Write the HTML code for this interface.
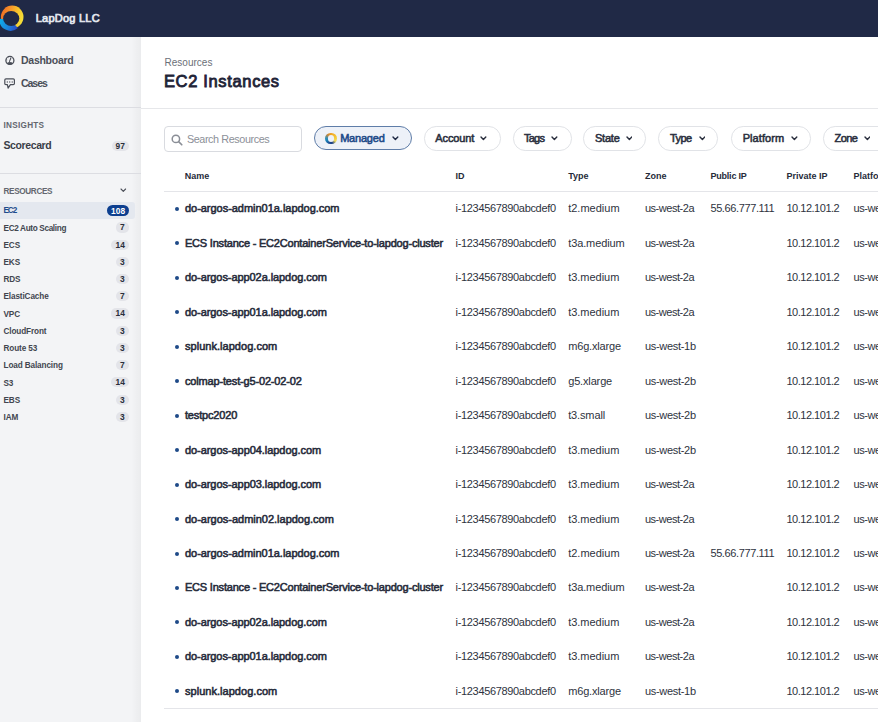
<!DOCTYPE html>
<html><head><meta charset="utf-8">
<style>
*{box-sizing:border-box;margin:0;padding:0}
html,body{width:878px;height:722px;overflow:hidden;background:#fff;font-family:"Liberation Sans",sans-serif;color:#262b3a}
.t{position:absolute;white-space:nowrap}
.b{position:absolute}
</style></head><body>
<div class="b" style="left:0;top:0;width:878px;height:37px;background:#202946"></div>
<svg class="b" style="left:0;top:0" width="32" height="36" viewBox="0 0 32 36">
<defs>
<linearGradient id="lgA" x1="0" y1="0.3" x2="1" y2="0.6">
<stop offset="0" stop-color="#f06c22"/><stop offset="0.35" stop-color="#f5952a"/><stop offset="0.7" stop-color="#f6c82c"/><stop offset="1" stop-color="#f6e23a"/>
</linearGradient>
<linearGradient id="lgB" x1="0" y1="0.4" x2="1" y2="0.7">
<stop offset="0" stop-color="#10a8ea"/><stop offset="0.5" stop-color="#1b84dc"/><stop offset="1" stop-color="#2c48c4"/>
</linearGradient>
</defs>
<circle cx="12.2" cy="16.9" r="11.3" fill="url(#lgA)"/>
<path d="M10.5 19.8 L17.86 27.97 A11 11 0 0 1 -0.44 18.65 Z" fill="url(#lgB)"/>
<ellipse cx="11.2" cy="18.5" rx="8.1" ry="7.5" fill="#202946"/>
</svg>
<div class="t" style="left:35.75px;top:13.00px;font-size:11px;line-height:11px;font-weight:normal;color:#e6e9f0;letter-spacing:0.231px;-webkit-text-stroke:0.7px #e6e9f0;">LapDog LLC</div>
<div class="b" style="left:0;top:37px;width:141px;height:685px;background:#f3f4f6"></div>
<div class="b" style="left:131px;top:37px;width:10px;height:685px;background:linear-gradient(to right,rgba(0,0,0,0),rgba(0,0,0,0.035))"></div>
<svg class="b" style="left:0;top:50px" width="20" height="45" viewBox="0 50 20 45">
<circle cx="9.9" cy="60.45" r="4.0" fill="none" stroke="#4a4e58" stroke-width="1.3"/>
<path d="M6.6 63.2 Q9.9 60.6 13.2 63.2 L12.6 64.1 Q9.9 65.6 7.2 64.1 Z" fill="#4a4e58"/>
<path d="M9.5 61.4 L10.9 57.9" stroke="#4a4e58" stroke-width="1.1" stroke-linecap="round"/>
<path d="M6.3 59.6 L7.2 59.9 M8.0 57.4 L8.4 58.1 M12.7 58.5 L12.1 59.1" stroke="#4a4e58" stroke-width="0.7"/>
</svg>
<div class="t" style="left:21.00px;top:55.00px;font-size:10.5px;line-height:10.5px;font-weight:bold;color:#4a4e58;letter-spacing:-0.266px;">Dashboard</div>
<svg class="b" style="left:0;top:75px" width="20" height="16" viewBox="0 75 20 16">
<path d="M6.0 78.9 H13.2 Q14.4 78.9 14.4 80.1 V83.4 Q14.4 84.6 13.2 84.6 H10.4 L8.1 88.1 L7.4 84.6 H6.0 Q4.8 84.6 4.8 83.4 V80.1 Q4.8 78.9 6.0 78.9 Z" fill="none" stroke="#4a4e58" stroke-width="1.2" stroke-linejoin="round"/>
<circle cx="7.3" cy="82.0" r="0.65" fill="#4a4e58"/><circle cx="9.75" cy="82.0" r="0.65" fill="#4a4e58"/><circle cx="12.2" cy="82.0" r="0.65" fill="#4a4e58"/>
</svg>
<div class="t" style="left:21.00px;top:78.00px;font-size:10.5px;line-height:10.5px;font-weight:bold;color:#4a4e58;letter-spacing:-1.025px;">Cases</div>
<div class="b" style="left:0;top:107px;width:141px;height:1px;background:#dcdde2"></div>
<div class="t" style="left:3.50px;top:122.00px;font-size:8.2px;line-height:8.2px;font-weight:bold;color:#63676f;letter-spacing:0.271px;">INSIGHTS</div>
<div class="t" style="left:3.50px;top:140.00px;font-size:10.5px;line-height:10.5px;font-weight:bold;color:#3a3e48;letter-spacing:-0.393px;">Scorecard</div>
<div class="b" style="left:111.50px;top:141.00px;width:17.3px;height:10.1px;border-radius:5.05px;background:#e3e4e9"></div>
<div class="t" style="left:115.52px;top:142.00px;font-size:8.4px;line-height:8.4px;font-weight:bold;color:#2a2e3a;letter-spacing:0.000px;">97</div>
<div class="b" style="left:0;top:173px;width:141px;height:1px;background:#dcdde2"></div>
<div class="t" style="left:3.50px;top:188.00px;font-size:8.2px;line-height:8.2px;font-weight:bold;color:#63676f;letter-spacing:-0.350px;">RESOURCES</div>
<svg class="t" style="left:120.40px;top:188.20px" width="6.6" height="4.4" viewBox="0 0 6.6 4.4"><path d="M1 1 L3.3 3.4 L5.6 1" fill="none" stroke="#4a4e58" stroke-width="1.1" stroke-linecap="round" stroke-linejoin="round"/></svg>
<div class="b" style="left:0;top:202.2px;width:135px;height:16.4px;background:#e4e8ef;border-radius:0 3px 3px 0"></div>
<div class="t" style="left:3.50px;top:207.00px;font-size:8.2px;line-height:8.2px;font-weight:bold;color:#1e4c8c;letter-spacing:-1.087px;">EC2</div>
<div class="b" style="left:106.90px;top:204.80px;width:22.3px;height:11.6px;border-radius:5.8px;background:#0d3f8f"></div>
<div class="t" style="left:111.09px;top:207.00px;font-size:8.4px;line-height:8.4px;font-weight:bold;color:#ffffff;letter-spacing:0.000px;">108</div>
<div class="t" style="left:3.50px;top:225.00px;font-size:8.2px;line-height:8.2px;font-weight:bold;color:#42464f;letter-spacing:-0.336px;">EC2 Auto Scaling</div>
<div class="b" style="left:115.60px;top:222.32px;width:13.2px;height:10.2px;border-radius:5.1px;background:#e3e4e9"></div>
<div class="t" style="left:119.90px;top:223.00px;font-size:8.4px;line-height:8.4px;font-weight:bold;color:#2a2e3a;letter-spacing:0.000px;">7</div>
<div class="t" style="left:3.50px;top:242.00px;font-size:8.2px;line-height:8.2px;font-weight:bold;color:#42464f;letter-spacing:-0.120px;">ECS</div>
<div class="b" style="left:111.40px;top:239.54px;width:17.4px;height:10.2px;border-radius:5.1px;background:#e3e4e9"></div>
<div class="t" style="left:115.47px;top:241.00px;font-size:8.4px;line-height:8.4px;font-weight:bold;color:#2a2e3a;letter-spacing:0.000px;">14</div>
<div class="t" style="left:3.50px;top:259.00px;font-size:8.2px;line-height:8.2px;font-weight:bold;color:#42464f;letter-spacing:-0.120px;">EKS</div>
<div class="b" style="left:115.60px;top:256.76px;width:13.2px;height:10.2px;border-radius:5.1px;background:#e3e4e9"></div>
<div class="t" style="left:119.90px;top:258.00px;font-size:8.4px;line-height:8.4px;font-weight:bold;color:#2a2e3a;letter-spacing:0.000px;">3</div>
<div class="t" style="left:3.50px;top:276.00px;font-size:8.2px;line-height:8.2px;font-weight:bold;color:#42464f;letter-spacing:-0.120px;">RDS</div>
<div class="b" style="left:115.60px;top:273.98px;width:13.2px;height:10.2px;border-radius:5.1px;background:#e3e4e9"></div>
<div class="t" style="left:119.90px;top:275.00px;font-size:8.4px;line-height:8.4px;font-weight:bold;color:#2a2e3a;letter-spacing:0.000px;">3</div>
<div class="t" style="left:3.50px;top:293.00px;font-size:8.2px;line-height:8.2px;font-weight:bold;color:#42464f;letter-spacing:-0.120px;">ElastiCache</div>
<div class="b" style="left:115.60px;top:291.20px;width:13.2px;height:10.2px;border-radius:5.1px;background:#e3e4e9"></div>
<div class="t" style="left:119.90px;top:292.00px;font-size:8.4px;line-height:8.4px;font-weight:bold;color:#2a2e3a;letter-spacing:0.000px;">7</div>
<div class="t" style="left:3.50px;top:311.00px;font-size:8.2px;line-height:8.2px;font-weight:bold;color:#42464f;letter-spacing:-0.120px;">VPC</div>
<div class="b" style="left:111.40px;top:308.42px;width:17.4px;height:10.2px;border-radius:5.1px;background:#e3e4e9"></div>
<div class="t" style="left:115.47px;top:309.00px;font-size:8.4px;line-height:8.4px;font-weight:bold;color:#2a2e3a;letter-spacing:0.000px;">14</div>
<div class="t" style="left:3.50px;top:328.00px;font-size:8.2px;line-height:8.2px;font-weight:bold;color:#42464f;letter-spacing:-0.120px;">CloudFront</div>
<div class="b" style="left:115.60px;top:325.64px;width:13.2px;height:10.2px;border-radius:5.1px;background:#e3e4e9"></div>
<div class="t" style="left:119.90px;top:327.00px;font-size:8.4px;line-height:8.4px;font-weight:bold;color:#2a2e3a;letter-spacing:0.000px;">3</div>
<div class="t" style="left:3.50px;top:345.00px;font-size:8.2px;line-height:8.2px;font-weight:bold;color:#42464f;letter-spacing:-0.120px;">Route 53</div>
<div class="b" style="left:115.60px;top:342.86px;width:13.2px;height:10.2px;border-radius:5.1px;background:#e3e4e9"></div>
<div class="t" style="left:119.90px;top:344.00px;font-size:8.4px;line-height:8.4px;font-weight:bold;color:#2a2e3a;letter-spacing:0.000px;">3</div>
<div class="t" style="left:3.50px;top:362.00px;font-size:8.2px;line-height:8.2px;font-weight:bold;color:#42464f;letter-spacing:-0.120px;">Load Balancing</div>
<div class="b" style="left:115.60px;top:360.08px;width:13.2px;height:10.2px;border-radius:5.1px;background:#e3e4e9"></div>
<div class="t" style="left:119.90px;top:361.00px;font-size:8.4px;line-height:8.4px;font-weight:bold;color:#2a2e3a;letter-spacing:0.000px;">7</div>
<div class="t" style="left:3.50px;top:380.00px;font-size:8.2px;line-height:8.2px;font-weight:bold;color:#42464f;letter-spacing:-0.120px;">S3</div>
<div class="b" style="left:111.40px;top:377.30px;width:17.4px;height:10.2px;border-radius:5.1px;background:#e3e4e9"></div>
<div class="t" style="left:115.47px;top:378.00px;font-size:8.4px;line-height:8.4px;font-weight:bold;color:#2a2e3a;letter-spacing:0.000px;">14</div>
<div class="t" style="left:3.50px;top:397.00px;font-size:8.2px;line-height:8.2px;font-weight:bold;color:#42464f;letter-spacing:-0.120px;">EBS</div>
<div class="b" style="left:115.60px;top:394.52px;width:13.2px;height:10.2px;border-radius:5.1px;background:#e3e4e9"></div>
<div class="t" style="left:119.90px;top:396.00px;font-size:8.4px;line-height:8.4px;font-weight:bold;color:#2a2e3a;letter-spacing:0.000px;">3</div>
<div class="t" style="left:3.50px;top:414.00px;font-size:8.2px;line-height:8.2px;font-weight:bold;color:#42464f;letter-spacing:-0.120px;">IAM</div>
<div class="b" style="left:115.60px;top:411.74px;width:13.2px;height:10.2px;border-radius:5.1px;background:#e3e4e9"></div>
<div class="t" style="left:119.90px;top:413.00px;font-size:8.4px;line-height:8.4px;font-weight:bold;color:#2a2e3a;letter-spacing:0.000px;">3</div>
<div class="t" style="left:164.50px;top:58.00px;font-size:10px;line-height:10px;font-weight:normal;color:#6b6f78;letter-spacing:0.013px;">Resources</div>
<div class="t" style="left:163.93px;top:73.00px;font-size:16.5px;line-height:16.5px;font-weight:normal;color:#1f2437;letter-spacing:0.658px;-webkit-text-stroke:0.85px #1f2437;">EC2 Instances</div>
<div class="b" style="left:141px;top:108px;width:737px;height:1px;background:#e6e7ea"></div>
<div class="b" style="left:164px;top:126.4px;width:138px;height:25.5px;border:1px solid #d9dbe0;border-radius:4px;background:#fff"></div>
<svg class="b" style="left:170.5px;top:133.5px" width="12" height="12" viewBox="0 0 12 12">
<circle cx="4.9" cy="4.9" r="3.7" fill="none" stroke="#8a8e96" stroke-width="1.5"/>
<path d="M7.6 7.6 L10.8 10.8" stroke="#8a8e96" stroke-width="1.6" stroke-linecap="round"/>
</svg>
<div class="t" style="left:186.90px;top:134.00px;font-size:10.8px;line-height:10.8px;font-weight:normal;color:#8c9098;letter-spacing:-0.401px;">Search Resources</div>
<div class="b" style="left:314px;top:126.2px;width:98px;height:24.2px;border:1px solid #5f7da8;border-radius:12.1px;background:#edf1f8"></div>
<div class="b" style="left:325.3px;top:132.6px;width:11.8px;height:11.8px;border-radius:50%;background:conic-gradient(#f0a326 0deg,#f3c636 70deg,#f2dc5a 120deg,#1b3f88 165deg,#1c4a90 200deg,#1a82b8 245deg,#2f8fb8 275deg,#c98638 320deg,#f0a326 360deg)"></div>
<div class="b" style="left:327.9px;top:135.1px;width:6.6px;height:6.6px;border-radius:50%;background:#edf1f8"></div>
<div class="t" style="left:340.17px;top:133.00px;font-size:11px;line-height:11px;font-weight:normal;color:#1d4a88;letter-spacing:-0.200px;-webkit-text-stroke:0.55px #1d4a88;">Managed</div>
<svg class="t" style="left:391.80px;top:136.30px" width="6.8" height="4.6" viewBox="0 0 6.8 4.6"><path d="M1 1 L3.4 3.6 L5.8 1" fill="none" stroke="#1f2a44" stroke-width="1.4" stroke-linecap="round" stroke-linejoin="round"/></svg>
<div class="b" style="left:423.7px;top:126.2px;width:76.9px;height:24.4px;border:1px solid #e1e3e7;border-radius:12.2px;background:#fff"></div>
<div class="t" style="left:435.27px;top:133.00px;font-size:11px;line-height:11px;font-weight:normal;color:#2a2f3e;letter-spacing:-0.107px;-webkit-text-stroke:0.55px #2a2f3e;">Account</div>
<svg class="t" style="left:480.20px;top:136.10px" width="6.8" height="4.6" viewBox="0 0 6.8 4.6"><path d="M1 1 L3.4 3.6 L5.8 1" fill="none" stroke="#2a2f3e" stroke-width="1.4" stroke-linecap="round" stroke-linejoin="round"/></svg>
<div class="b" style="left:512.6px;top:126.2px;width:59.0px;height:24.4px;border:1px solid #e1e3e7;border-radius:12.2px;background:#fff"></div>
<div class="t" style="left:524.07px;top:133.00px;font-size:11px;line-height:11px;font-weight:normal;color:#2a2f3e;letter-spacing:-0.795px;-webkit-text-stroke:0.55px #2a2f3e;">Tags</div>
<svg class="t" style="left:551.30px;top:136.10px" width="6.8" height="4.6" viewBox="0 0 6.8 4.6"><path d="M1 1 L3.4 3.6 L5.8 1" fill="none" stroke="#2a2f3e" stroke-width="1.4" stroke-linecap="round" stroke-linejoin="round"/></svg>
<div class="b" style="left:583.1px;top:126.2px;width:62.9px;height:24.4px;border:1px solid #e1e3e7;border-radius:12.2px;background:#fff"></div>
<div class="t" style="left:594.88px;top:133.00px;font-size:11px;line-height:11px;font-weight:normal;color:#2a2f3e;letter-spacing:-0.179px;-webkit-text-stroke:0.55px #2a2f3e;">State</div>
<svg class="t" style="left:625.60px;top:136.10px" width="6.8" height="4.6" viewBox="0 0 6.8 4.6"><path d="M1 1 L3.4 3.6 L5.8 1" fill="none" stroke="#2a2f3e" stroke-width="1.4" stroke-linecap="round" stroke-linejoin="round"/></svg>
<div class="b" style="left:658.3px;top:126.2px;width:60.2px;height:24.4px;border:1px solid #e1e3e7;border-radius:12.2px;background:#fff"></div>
<div class="t" style="left:669.98px;top:133.00px;font-size:11px;line-height:11px;font-weight:normal;color:#2a2f3e;letter-spacing:-0.593px;-webkit-text-stroke:0.55px #2a2f3e;">Type</div>
<svg class="t" style="left:698.50px;top:136.10px" width="6.8" height="4.6" viewBox="0 0 6.8 4.6"><path d="M1 1 L3.4 3.6 L5.8 1" fill="none" stroke="#2a2f3e" stroke-width="1.4" stroke-linecap="round" stroke-linejoin="round"/></svg>
<div class="b" style="left:730.5px;top:126.2px;width:80.4px;height:24.4px;border:1px solid #e1e3e7;border-radius:12.2px;background:#fff"></div>
<div class="t" style="left:742.67px;top:133.00px;font-size:11px;line-height:11px;font-weight:normal;color:#2a2f3e;letter-spacing:0.080px;-webkit-text-stroke:0.55px #2a2f3e;">Platform</div>
<svg class="t" style="left:791.40px;top:136.10px" width="6.8" height="4.6" viewBox="0 0 6.8 4.6"><path d="M1 1 L3.4 3.6 L5.8 1" fill="none" stroke="#2a2f3e" stroke-width="1.4" stroke-linecap="round" stroke-linejoin="round"/></svg>
<div class="b" style="left:822.8px;top:126.2px;width:77.2px;height:24.4px;border:1px solid #e1e3e7;border-radius:12.2px;background:#fff"></div>
<div class="t" style="left:834.48px;top:133.00px;font-size:11px;line-height:11px;font-weight:normal;color:#2a2f3e;letter-spacing:-0.535px;-webkit-text-stroke:0.55px #2a2f3e;">Zone</div>
<svg class="t" style="left:863.60px;top:136.10px" width="6.8" height="4.6" viewBox="0 0 6.8 4.6"><path d="M1 1 L3.4 3.6 L5.8 1" fill="none" stroke="#2a2f3e" stroke-width="1.4" stroke-linecap="round" stroke-linejoin="round"/></svg>
<div class="t" style="left:184.70px;top:172.00px;font-size:9px;line-height:9px;font-weight:bold;color:#262b3a;letter-spacing:0.000px;">Name</div>
<div class="t" style="left:455.60px;top:172.00px;font-size:9px;line-height:9px;font-weight:bold;color:#262b3a;letter-spacing:0.000px;">ID</div>
<div class="t" style="left:568.20px;top:172.00px;font-size:9px;line-height:9px;font-weight:bold;color:#262b3a;letter-spacing:0.000px;">Type</div>
<div class="t" style="left:644.90px;top:172.00px;font-size:9px;line-height:9px;font-weight:bold;color:#262b3a;letter-spacing:0.000px;">Zone</div>
<div class="t" style="left:710.40px;top:172.00px;font-size:9px;line-height:9px;font-weight:bold;color:#262b3a;letter-spacing:-0.201px;">Public IP</div>
<div class="t" style="left:786.40px;top:172.00px;font-size:9px;line-height:9px;font-weight:bold;color:#262b3a;letter-spacing:0.000px;">Private IP</div>
<div class="t" style="left:853.50px;top:172.00px;font-size:9px;line-height:9px;font-weight:bold;color:#262b3a;letter-spacing:0.000px;">Platform</div>
<div class="b" style="left:163.5px;top:191px;width:715px;height:1px;background:#e4e5e9"></div>
<div class="b" style="left:175.4px;top:206.90px;width:4px;height:4px;border-radius:50%;background:#1e4a88"></div>
<div class="t" style="left:184.97px;top:203.00px;font-size:11px;line-height:11px;font-weight:normal;color:#262b3a;letter-spacing:-0.030px;-webkit-text-stroke:0.55px #262b3a;">do-argos-admin01a.lapdog.com</div>
<div class="t" style="left:455.60px;top:203.00px;font-size:11px;line-height:11px;font-weight:normal;color:#2e3340;letter-spacing:-0.334px;">i-1234567890abcdef0</div>
<div class="t" style="left:568.20px;top:203.00px;font-size:11px;line-height:11px;font-weight:normal;color:#2e3340;letter-spacing:0.001px;">t2.medium</div>
<div class="t" style="left:644.90px;top:203.00px;font-size:11px;line-height:11px;font-weight:normal;color:#2e3340;letter-spacing:-0.453px;">us-west-2a</div>
<div class="t" style="left:710.40px;top:203.00px;font-size:11px;line-height:11px;font-weight:normal;color:#2e3340;letter-spacing:-0.383px;">55.66.777.111</div>
<div class="t" style="left:786.40px;top:203.00px;font-size:11px;line-height:11px;font-weight:normal;color:#2e3340;letter-spacing:-0.479px;">10.12.101.2</div>
<div class="t" style="left:853.50px;top:203.00px;font-size:11px;line-height:11px;font-weight:normal;color:#2e3340;letter-spacing:-0.453px;">us-west-2a</div>
<div class="b" style="left:175.4px;top:241.36px;width:4px;height:4px;border-radius:50%;background:#1e4a88"></div>
<div class="t" style="left:184.97px;top:238.00px;font-size:11px;line-height:11px;font-weight:normal;color:#262b3a;letter-spacing:-0.202px;-webkit-text-stroke:0.55px #262b3a;">ECS Instance - EC2ContainerService-to-lapdog-cluster</div>
<div class="t" style="left:455.60px;top:238.00px;font-size:11px;line-height:11px;font-weight:normal;color:#2e3340;letter-spacing:-0.334px;">i-1234567890abcdef0</div>
<div class="t" style="left:568.20px;top:238.00px;font-size:11px;line-height:11px;font-weight:normal;color:#2e3340;letter-spacing:-0.112px;">t3a.medium</div>
<div class="t" style="left:644.90px;top:238.00px;font-size:11px;line-height:11px;font-weight:normal;color:#2e3340;letter-spacing:-0.453px;">us-west-2a</div>
<div class="t" style="left:786.40px;top:238.00px;font-size:11px;line-height:11px;font-weight:normal;color:#2e3340;letter-spacing:-0.479px;">10.12.101.2</div>
<div class="t" style="left:853.50px;top:238.00px;font-size:11px;line-height:11px;font-weight:normal;color:#2e3340;letter-spacing:-0.453px;">us-west-2a</div>
<div class="b" style="left:175.4px;top:275.82px;width:4px;height:4px;border-radius:50%;background:#1e4a88"></div>
<div class="t" style="left:184.97px;top:272.00px;font-size:11px;line-height:11px;font-weight:normal;color:#262b3a;letter-spacing:-0.072px;-webkit-text-stroke:0.55px #262b3a;">do-argos-app02a.lapdog.com</div>
<div class="t" style="left:455.60px;top:272.00px;font-size:11px;line-height:11px;font-weight:normal;color:#2e3340;letter-spacing:-0.334px;">i-1234567890abcdef0</div>
<div class="t" style="left:568.20px;top:272.00px;font-size:11px;line-height:11px;font-weight:normal;color:#2e3340;letter-spacing:-0.024px;">t3.medium</div>
<div class="t" style="left:644.90px;top:272.00px;font-size:11px;line-height:11px;font-weight:normal;color:#2e3340;letter-spacing:-0.453px;">us-west-2a</div>
<div class="t" style="left:786.40px;top:272.00px;font-size:11px;line-height:11px;font-weight:normal;color:#2e3340;letter-spacing:-0.479px;">10.12.101.2</div>
<div class="t" style="left:853.50px;top:272.00px;font-size:11px;line-height:11px;font-weight:normal;color:#2e3340;letter-spacing:-0.453px;">us-west-2a</div>
<div class="b" style="left:175.4px;top:310.28px;width:4px;height:4px;border-radius:50%;background:#1e4a88"></div>
<div class="t" style="left:184.97px;top:307.00px;font-size:11px;line-height:11px;font-weight:normal;color:#262b3a;letter-spacing:-0.072px;-webkit-text-stroke:0.55px #262b3a;">do-argos-app01a.lapdog.com</div>
<div class="t" style="left:455.60px;top:307.00px;font-size:11px;line-height:11px;font-weight:normal;color:#2e3340;letter-spacing:-0.334px;">i-1234567890abcdef0</div>
<div class="t" style="left:568.20px;top:307.00px;font-size:11px;line-height:11px;font-weight:normal;color:#2e3340;letter-spacing:-0.024px;">t3.medium</div>
<div class="t" style="left:644.90px;top:307.00px;font-size:11px;line-height:11px;font-weight:normal;color:#2e3340;letter-spacing:-0.453px;">us-west-2a</div>
<div class="t" style="left:786.40px;top:307.00px;font-size:11px;line-height:11px;font-weight:normal;color:#2e3340;letter-spacing:-0.479px;">10.12.101.2</div>
<div class="t" style="left:853.50px;top:307.00px;font-size:11px;line-height:11px;font-weight:normal;color:#2e3340;letter-spacing:-0.453px;">us-west-2a</div>
<div class="b" style="left:175.4px;top:344.74px;width:4px;height:4px;border-radius:50%;background:#1e4a88"></div>
<div class="t" style="left:184.97px;top:341.00px;font-size:11px;line-height:11px;font-weight:normal;color:#262b3a;letter-spacing:0.037px;-webkit-text-stroke:0.55px #262b3a;">splunk.lapdog.com</div>
<div class="t" style="left:455.60px;top:341.00px;font-size:11px;line-height:11px;font-weight:normal;color:#2e3340;letter-spacing:-0.334px;">i-1234567890abcdef0</div>
<div class="t" style="left:568.20px;top:341.00px;font-size:11px;line-height:11px;font-weight:normal;color:#2e3340;letter-spacing:-0.166px;">m6g.xlarge</div>
<div class="t" style="left:644.90px;top:341.00px;font-size:11px;line-height:11px;font-weight:normal;color:#2e3340;letter-spacing:-0.298px;">us-west-1b</div>
<div class="t" style="left:786.40px;top:341.00px;font-size:11px;line-height:11px;font-weight:normal;color:#2e3340;letter-spacing:-0.479px;">10.12.101.2</div>
<div class="t" style="left:853.50px;top:341.00px;font-size:11px;line-height:11px;font-weight:normal;color:#2e3340;letter-spacing:-0.453px;">us-west-2a</div>
<div class="b" style="left:175.4px;top:379.20px;width:4px;height:4px;border-radius:50%;background:#1e4a88"></div>
<div class="t" style="left:184.97px;top:376.00px;font-size:11px;line-height:11px;font-weight:normal;color:#262b3a;letter-spacing:-0.163px;-webkit-text-stroke:0.55px #262b3a;">colmap-test-g5-02-02-02</div>
<div class="t" style="left:455.60px;top:376.00px;font-size:11px;line-height:11px;font-weight:normal;color:#2e3340;letter-spacing:-0.334px;">i-1234567890abcdef0</div>
<div class="t" style="left:568.20px;top:376.00px;font-size:11px;line-height:11px;font-weight:normal;color:#2e3340;letter-spacing:-0.154px;">g5.xlarge</div>
<div class="t" style="left:644.90px;top:376.00px;font-size:11px;line-height:11px;font-weight:normal;color:#2e3340;letter-spacing:-0.298px;">us-west-2b</div>
<div class="t" style="left:786.40px;top:376.00px;font-size:11px;line-height:11px;font-weight:normal;color:#2e3340;letter-spacing:-0.479px;">10.12.101.2</div>
<div class="t" style="left:853.50px;top:376.00px;font-size:11px;line-height:11px;font-weight:normal;color:#2e3340;letter-spacing:-0.453px;">us-west-2a</div>
<div class="b" style="left:175.4px;top:413.66px;width:4px;height:4px;border-radius:50%;background:#1e4a88"></div>
<div class="t" style="left:184.97px;top:410.00px;font-size:11px;line-height:11px;font-weight:normal;color:#262b3a;letter-spacing:-0.161px;-webkit-text-stroke:0.55px #262b3a;">testpc2020</div>
<div class="t" style="left:455.60px;top:410.00px;font-size:11px;line-height:11px;font-weight:normal;color:#2e3340;letter-spacing:-0.334px;">i-1234567890abcdef0</div>
<div class="t" style="left:568.20px;top:410.00px;font-size:11px;line-height:11px;font-weight:normal;color:#2e3340;letter-spacing:-0.136px;">t3.small</div>
<div class="t" style="left:644.90px;top:410.00px;font-size:11px;line-height:11px;font-weight:normal;color:#2e3340;letter-spacing:-0.298px;">us-west-2b</div>
<div class="t" style="left:786.40px;top:410.00px;font-size:11px;line-height:11px;font-weight:normal;color:#2e3340;letter-spacing:-0.479px;">10.12.101.2</div>
<div class="t" style="left:853.50px;top:410.00px;font-size:11px;line-height:11px;font-weight:normal;color:#2e3340;letter-spacing:-0.453px;">us-west-2a</div>
<div class="b" style="left:175.4px;top:448.12px;width:4px;height:4px;border-radius:50%;background:#1e4a88"></div>
<div class="t" style="left:184.97px;top:445.00px;font-size:11px;line-height:11px;font-weight:normal;color:#262b3a;letter-spacing:-0.057px;-webkit-text-stroke:0.55px #262b3a;">do-argos-app04.lapdog.com</div>
<div class="t" style="left:455.60px;top:445.00px;font-size:11px;line-height:11px;font-weight:normal;color:#2e3340;letter-spacing:-0.334px;">i-1234567890abcdef0</div>
<div class="t" style="left:568.20px;top:445.00px;font-size:11px;line-height:11px;font-weight:normal;color:#2e3340;letter-spacing:-0.024px;">t3.medium</div>
<div class="t" style="left:644.90px;top:445.00px;font-size:11px;line-height:11px;font-weight:normal;color:#2e3340;letter-spacing:-0.298px;">us-west-2b</div>
<div class="t" style="left:786.40px;top:445.00px;font-size:11px;line-height:11px;font-weight:normal;color:#2e3340;letter-spacing:-0.479px;">10.12.101.2</div>
<div class="t" style="left:853.50px;top:445.00px;font-size:11px;line-height:11px;font-weight:normal;color:#2e3340;letter-spacing:-0.453px;">us-west-2a</div>
<div class="b" style="left:175.4px;top:482.58px;width:4px;height:4px;border-radius:50%;background:#1e4a88"></div>
<div class="t" style="left:184.97px;top:479.00px;font-size:11px;line-height:11px;font-weight:normal;color:#262b3a;letter-spacing:-0.057px;-webkit-text-stroke:0.55px #262b3a;">do-argos-app03.lapdog.com</div>
<div class="t" style="left:455.60px;top:479.00px;font-size:11px;line-height:11px;font-weight:normal;color:#2e3340;letter-spacing:-0.334px;">i-1234567890abcdef0</div>
<div class="t" style="left:568.20px;top:479.00px;font-size:11px;line-height:11px;font-weight:normal;color:#2e3340;letter-spacing:-0.024px;">t3.medium</div>
<div class="t" style="left:644.90px;top:479.00px;font-size:11px;line-height:11px;font-weight:normal;color:#2e3340;letter-spacing:-0.453px;">us-west-2a</div>
<div class="t" style="left:786.40px;top:479.00px;font-size:11px;line-height:11px;font-weight:normal;color:#2e3340;letter-spacing:-0.479px;">10.12.101.2</div>
<div class="t" style="left:853.50px;top:479.00px;font-size:11px;line-height:11px;font-weight:normal;color:#2e3340;letter-spacing:-0.453px;">us-west-2a</div>
<div class="b" style="left:175.4px;top:517.04px;width:4px;height:4px;border-radius:50%;background:#1e4a88"></div>
<div class="t" style="left:184.97px;top:514.00px;font-size:11px;line-height:11px;font-weight:normal;color:#262b3a;letter-spacing:-0.011px;-webkit-text-stroke:0.55px #262b3a;">do-argos-admin02.lapdog.com</div>
<div class="t" style="left:455.60px;top:514.00px;font-size:11px;line-height:11px;font-weight:normal;color:#2e3340;letter-spacing:-0.334px;">i-1234567890abcdef0</div>
<div class="t" style="left:568.20px;top:514.00px;font-size:11px;line-height:11px;font-weight:normal;color:#2e3340;letter-spacing:-0.024px;">t3.medium</div>
<div class="t" style="left:644.90px;top:514.00px;font-size:11px;line-height:11px;font-weight:normal;color:#2e3340;letter-spacing:-0.453px;">us-west-2a</div>
<div class="t" style="left:786.40px;top:514.00px;font-size:11px;line-height:11px;font-weight:normal;color:#2e3340;letter-spacing:-0.479px;">10.12.101.2</div>
<div class="t" style="left:853.50px;top:514.00px;font-size:11px;line-height:11px;font-weight:normal;color:#2e3340;letter-spacing:-0.453px;">us-west-2a</div>
<div class="b" style="left:175.4px;top:551.50px;width:4px;height:4px;border-radius:50%;background:#1e4a88"></div>
<div class="t" style="left:184.97px;top:548.00px;font-size:11px;line-height:11px;font-weight:normal;color:#262b3a;letter-spacing:-0.030px;-webkit-text-stroke:0.55px #262b3a;">do-argos-admin01a.lapdog.com</div>
<div class="t" style="left:455.60px;top:548.00px;font-size:11px;line-height:11px;font-weight:normal;color:#2e3340;letter-spacing:-0.334px;">i-1234567890abcdef0</div>
<div class="t" style="left:568.20px;top:548.00px;font-size:11px;line-height:11px;font-weight:normal;color:#2e3340;letter-spacing:0.001px;">t2.medium</div>
<div class="t" style="left:644.90px;top:548.00px;font-size:11px;line-height:11px;font-weight:normal;color:#2e3340;letter-spacing:-0.453px;">us-west-2a</div>
<div class="t" style="left:710.40px;top:548.00px;font-size:11px;line-height:11px;font-weight:normal;color:#2e3340;letter-spacing:-0.383px;">55.66.777.111</div>
<div class="t" style="left:786.40px;top:548.00px;font-size:11px;line-height:11px;font-weight:normal;color:#2e3340;letter-spacing:-0.479px;">10.12.101.2</div>
<div class="t" style="left:853.50px;top:548.00px;font-size:11px;line-height:11px;font-weight:normal;color:#2e3340;letter-spacing:-0.453px;">us-west-2a</div>
<div class="b" style="left:175.4px;top:585.96px;width:4px;height:4px;border-radius:50%;background:#1e4a88"></div>
<div class="t" style="left:184.97px;top:582.00px;font-size:11px;line-height:11px;font-weight:normal;color:#262b3a;letter-spacing:-0.202px;-webkit-text-stroke:0.55px #262b3a;">ECS Instance - EC2ContainerService-to-lapdog-cluster</div>
<div class="t" style="left:455.60px;top:582.00px;font-size:11px;line-height:11px;font-weight:normal;color:#2e3340;letter-spacing:-0.334px;">i-1234567890abcdef0</div>
<div class="t" style="left:568.20px;top:582.00px;font-size:11px;line-height:11px;font-weight:normal;color:#2e3340;letter-spacing:-0.112px;">t3a.medium</div>
<div class="t" style="left:644.90px;top:582.00px;font-size:11px;line-height:11px;font-weight:normal;color:#2e3340;letter-spacing:-0.453px;">us-west-2a</div>
<div class="t" style="left:786.40px;top:582.00px;font-size:11px;line-height:11px;font-weight:normal;color:#2e3340;letter-spacing:-0.479px;">10.12.101.2</div>
<div class="t" style="left:853.50px;top:582.00px;font-size:11px;line-height:11px;font-weight:normal;color:#2e3340;letter-spacing:-0.453px;">us-west-2a</div>
<div class="b" style="left:175.4px;top:620.42px;width:4px;height:4px;border-radius:50%;background:#1e4a88"></div>
<div class="t" style="left:184.97px;top:617.00px;font-size:11px;line-height:11px;font-weight:normal;color:#262b3a;letter-spacing:-0.072px;-webkit-text-stroke:0.55px #262b3a;">do-argos-app02a.lapdog.com</div>
<div class="t" style="left:455.60px;top:617.00px;font-size:11px;line-height:11px;font-weight:normal;color:#2e3340;letter-spacing:-0.334px;">i-1234567890abcdef0</div>
<div class="t" style="left:568.20px;top:617.00px;font-size:11px;line-height:11px;font-weight:normal;color:#2e3340;letter-spacing:-0.024px;">t3.medium</div>
<div class="t" style="left:644.90px;top:617.00px;font-size:11px;line-height:11px;font-weight:normal;color:#2e3340;letter-spacing:-0.453px;">us-west-2a</div>
<div class="t" style="left:786.40px;top:617.00px;font-size:11px;line-height:11px;font-weight:normal;color:#2e3340;letter-spacing:-0.479px;">10.12.101.2</div>
<div class="t" style="left:853.50px;top:617.00px;font-size:11px;line-height:11px;font-weight:normal;color:#2e3340;letter-spacing:-0.453px;">us-west-2a</div>
<div class="b" style="left:175.4px;top:654.88px;width:4px;height:4px;border-radius:50%;background:#1e4a88"></div>
<div class="t" style="left:184.97px;top:651.00px;font-size:11px;line-height:11px;font-weight:normal;color:#262b3a;letter-spacing:-0.072px;-webkit-text-stroke:0.55px #262b3a;">do-argos-app01a.lapdog.com</div>
<div class="t" style="left:455.60px;top:651.00px;font-size:11px;line-height:11px;font-weight:normal;color:#2e3340;letter-spacing:-0.334px;">i-1234567890abcdef0</div>
<div class="t" style="left:568.20px;top:651.00px;font-size:11px;line-height:11px;font-weight:normal;color:#2e3340;letter-spacing:-0.024px;">t3.medium</div>
<div class="t" style="left:644.90px;top:651.00px;font-size:11px;line-height:11px;font-weight:normal;color:#2e3340;letter-spacing:-0.453px;">us-west-2a</div>
<div class="t" style="left:786.40px;top:651.00px;font-size:11px;line-height:11px;font-weight:normal;color:#2e3340;letter-spacing:-0.479px;">10.12.101.2</div>
<div class="t" style="left:853.50px;top:651.00px;font-size:11px;line-height:11px;font-weight:normal;color:#2e3340;letter-spacing:-0.453px;">us-west-2a</div>
<div class="b" style="left:175.4px;top:689.34px;width:4px;height:4px;border-radius:50%;background:#1e4a88"></div>
<div class="t" style="left:184.97px;top:686.00px;font-size:11px;line-height:11px;font-weight:normal;color:#262b3a;letter-spacing:0.037px;-webkit-text-stroke:0.55px #262b3a;">splunk.lapdog.com</div>
<div class="t" style="left:455.60px;top:686.00px;font-size:11px;line-height:11px;font-weight:normal;color:#2e3340;letter-spacing:-0.334px;">i-1234567890abcdef0</div>
<div class="t" style="left:568.20px;top:686.00px;font-size:11px;line-height:11px;font-weight:normal;color:#2e3340;letter-spacing:-0.166px;">m6g.xlarge</div>
<div class="t" style="left:644.90px;top:686.00px;font-size:11px;line-height:11px;font-weight:normal;color:#2e3340;letter-spacing:-0.298px;">us-west-1b</div>
<div class="t" style="left:786.40px;top:686.00px;font-size:11px;line-height:11px;font-weight:normal;color:#2e3340;letter-spacing:-0.479px;">10.12.101.2</div>
<div class="t" style="left:853.50px;top:686.00px;font-size:11px;line-height:11px;font-weight:normal;color:#2e3340;letter-spacing:-0.453px;">us-west-2a</div>
<div class="b" style="left:163.5px;top:708px;width:715px;height:1px;background:#e4e5e9"></div>
</body></html>
